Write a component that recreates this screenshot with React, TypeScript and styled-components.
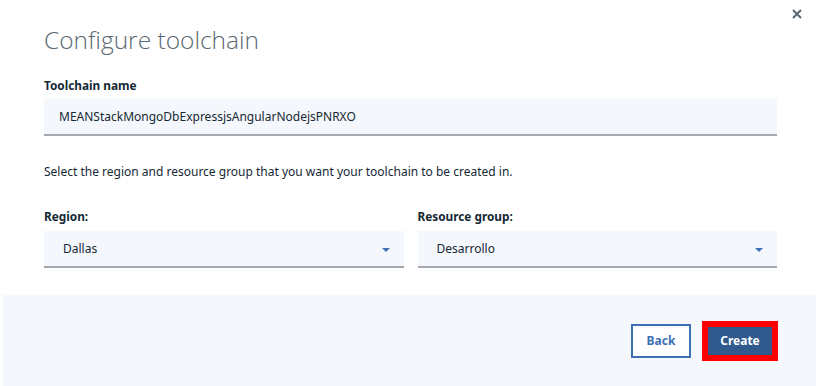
import React from "react";
import styled, { createGlobalStyle } from "styled-components";

const Global = createGlobalStyle`
  html, body { margin: 0; padding: 0; background: #ffffff; }
  body { font-family: "Noto Sans", "Open Sans", sans-serif; color: #152935; }
  * { box-sizing: border-box; }
`;

const Modal = styled.div`
  position: relative;
  width: 816px;
  height: 386px;
  background: #ffffff;
  display: flex;
  flex-direction: column;
  overflow: hidden;
`;

const Content = styled.div`
  padding: 0 39px 0 44px;
  display: flex;
  flex-direction: column;
`;

const CloseButton = styled.button`
  position: absolute;
  top: 7px;
  right: 12px;
  width: 14px;
  height: 14px;
  padding: 0;
  border: none;
  background: transparent;
  display: flex;
  align-items: center;
  justify-content: center;
  cursor: pointer;
`;

const Title = styled.h1`
  margin: 24px 0 0 0;
  font-family: "Open Sans", "Noto Sans", sans-serif;
  font-weight: 300;
  font-size: 24.5px;
  line-height: 32px;
  color: #5a6872;
  letter-spacing: 0;
`;

const Label = styled.div<{ $top: number }>`
  margin-top: ${(p) => p.$top}px;
  font-size: 11.8px;
  font-weight: 700;
  line-height: 16px;
  color: #152935;
`;

const Field = styled.div<{ $top: number; $select?: boolean }>`
  margin-top: ${(p) => p.$top}px;
  height: 37px;
  background: #f4f7fb;
  border-bottom: 2px solid #a4a9ad;
  display: flex;
  align-items: center;
  justify-content: space-between;
  padding: ${(p) => (p.$select ? "0 14px 0 19px" : "0 16px 0 15px")};
  font-size: 12px;
  color: #152935;
`;

const Description = styled.p`
  margin: 28px 0 0 0;
  font-size: 12px;
  line-height: 16px;
  color: #152935;
`;

const Row = styled.div`
  display: grid;
  grid-template-columns: 1fr 1fr;
  column-gap: 14px;
`;

const Column = styled.div`
  display: flex;
  flex-direction: column;
`;

const Caret = styled.span`
  width: 0;
  height: 0;
  border-left: 4px solid transparent;
  border-right: 4px solid transparent;
  border-top: 4px solid #3d70b2;
  margin-top: 2px;
`;

const Footer = styled.div`
  margin: 27px 0 0 3px;
  height: 91px;
  background: #f4f7fb;
  display: flex;
  justify-content: flex-end;
  align-items: center;
  gap: 11px;
  padding-right: 38px;
`;

const Button = styled.button<{ $primary?: boolean }>`
  font-family: "Noto Sans", sans-serif;
  font-weight: 700;
  font-size: 12px;
  display: flex;
  align-items: center;
  justify-content: center;
  cursor: pointer;
  ${(p) =>
    p.$primary
      ? `
    width: 76px;
    height: 40px;
    background: #30598e;
    color: #ffffff;
    border: 6px solid #ff0000;
  `
      : `
    width: 60px;
    height: 34px;
    background: #ffffff;
    color: #3d70b2;
    border: 2px solid #3d70b2;
  `}
`;

export default function App() {
  return (
    <>
      <Global />
      <Modal>
        <CloseButton aria-label="Close">
          <svg width="10" height="10" viewBox="0 0 10 10">
            <path d="M1 1 L9 9 M9 1 L1 9" stroke="#5a6872" strokeWidth="2" />
          </svg>
        </CloseButton>
        <Content>
          <Title>Configure toolchain</Title>
          <Label $top={21}>Toolchain name</Label>
          <Field $top={6}>MEANStackMongoDbExpressjsAngularNodejsPNRXO</Field>
          <Description>
            Select the region and resource group that you want your toolchain to be created in.
          </Description>
          <Row>
            <Column>
              <Label $top={28}>Region:</Label>
              <Field $top={7} $select>
                Dallas
                <Caret />
              </Field>
            </Column>
            <Column>
              <Label $top={28}>Resource group:</Label>
              <Field $top={7} $select>
                Desarrollo
                <Caret />
              </Field>
            </Column>
          </Row>
        </Content>
        <Footer>
          <Button>Back</Button>
          <Button $primary>Create</Button>
        </Footer>
      </Modal>
    </>
  );
}
